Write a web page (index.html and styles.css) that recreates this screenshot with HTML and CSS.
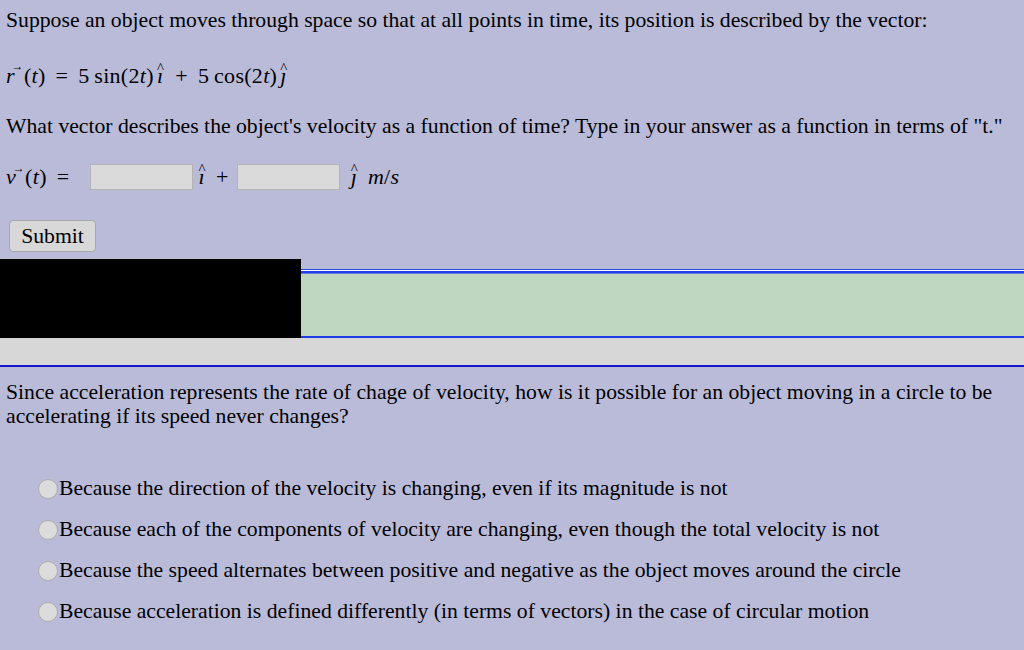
FILE: index.html
```html
<!DOCTYPE html>
<html lang="en">
<head>
    <meta charset="UTF-8">
    <title>Velocity question</title>
    <link rel="stylesheet" href="styles.css">
</head>
<body>
    <div class="section">
        <p class="line first">Suppose an object moves through space so that at all points in time, its position is described by the vector:</p>

        <p class="line math"><span class="vec"><i>r</i><span class="arrow">&rarr;</span></span>(<i>t</i>)<span class="op">=</span>5&thinsp;sin(2<i>t</i>)<span class="hat"><i>ı</i><span class="cap">^</span></span><span class="op">+</span>5&thinsp;cos(2<i>t</i>)<span class="hat"><i>ȷ</i><span class="cap">^</span></span></p>

        <p class="line">What vector describes the object's velocity as a function of time? Type in your answer as a function in terms of "t."</p>

        <form class="answer" onsubmit="return false">
            <div class="answer-row math"><span class="vec"><i>v</i><span class="arrow">&rarr;</span></span>(<i>t</i>)<span class="op">=</span><input type="text" class="answer-box" name="vx"><span class="hat"><i>ı</i><span class="cap">^</span></span><span class="op small">+</span><input type="text" class="answer-box" name="vy"><span class="hat last"><i>ȷ</i><span class="cap">^</span></span> <i>m</i>/<i>s</i></div>
            <button type="submit" class="submit-btn">Submit</button>
        </form>
    </div>

    <div class="result-row">
        <div class="redacted"></div>
        <div class="result">
            <div class="result-top"></div>
            <div class="result-fill"></div>
        </div>
    </div>
    <div class="result-gap"></div>

    <div class="section">
        <p class="question">Since acceleration represents the rate of chage of velocity, how is it possible for an object moving in a circle to be accelerating if its speed never changes?</p>

        <ul class="options">
            <li><label><input type="radio" name="q2">Because the direction of the velocity is changing, even if its magnitude is not</label></li>
            <li><label><input type="radio" name="q2">Because each of the components of velocity are changing, even though the total velocity is not</label></li>
            <li><label><input type="radio" name="q2">Because the speed alternates between positive and negative as the object moves around the circle</label></li>
            <li><label><input type="radio" name="q2">Because acceleration is defined differently (in terms of vectors) in the case of circular motion</label></li>
        </ul>
    </div>
</body>
</html>
```

FILE: styles.css
```css
:root {
    --page: #babbd9;
    --field: #dadada;
    --blue: #1f3ce8;
}

body {
    margin: 0;
    background: var(--page);
    font-family: 'Liberation Serif', 'Times New Roman', serif;
    font-size: 21.7px;
    color: #000;
}

.section {
    padding: 0 6px;
}

.line {
    margin: 0;
    height: 24px;
    line-height: 24px;
    white-space: nowrap;
}

.first {
    padding-top: 8px;
}

.line.math {
    margin-top: 32px;
}

.line + .line:not(.math) {
    margin-top: 26px;
}

.math {
    font-size: 22px;
    letter-spacing: 0.3px;
}

.math i {
    font-style: italic;
}

.op {
    padding: 0 10px;
}

.op.small {
    padding: 0 8px 0 9px;
}

.vec {
    position: relative;
    padding-right: 9px;
}

.arrow {
    position: absolute;
    right: 0;
    top: -9px;
    font-size: 12px;
    font-style: normal;
}

.hat {
    position: relative;
    display: inline-block;
    padding: 0 2px 0 3px;
}

.cap {
    position: absolute;
    left: 3px;
    top: -8px;
    font-size: 15px;
    font-style: normal;
}

.answer-row {
    margin-top: 26px;
    height: 26px;
    line-height: 26px;
    white-space: nowrap;
}

.answer-box {
    width: 103px;
    height: 26px;
    box-sizing: border-box;
    border: 1px solid #b4b4b4;
    background: var(--field);
    margin: 0 0 0 10px;
    vertical-align: top;
    font-size: 16px;
}

.answer-box + .hat {
    margin-left: 3px;
}

.answer-row .op.small + .answer-box {
    margin-left: 0;
}

.hat.last {
    margin-left: 8px;
    margin-right: 3px;
}

.submit-btn {
    display: block;
    margin: 30px 0 0 3px;
    width: 87px;
    height: 32px;
    font-family: inherit;
    font-size: 21.7px;
    background: #d8d8d8;
    border: 1px solid #a8a8a8;
    border-radius: 4px;
    padding: 0;
}

.result-row {
    display: flex;
    height: 79px;
    margin-top: 7px;
}

.redacted {
    width: 301px;
    background: #000;
}

.result {
    flex: 1;
    margin-top: 10px;
    display: flex;
    flex-direction: column;
    border-bottom: 2px solid var(--blue);
}

.result-top {
    height: 5px;
    background: linear-gradient(#2b46dc 0 1px, #fff 1px 2px, var(--blue) 2px 4px, #5f78e4 4px 5px);
}

.result-fill {
    flex: 1;
    background: #bfd7c0;
}

.result-gap {
    height: 27px;
    background: #d7d7d7;
    border-bottom: 2px solid #1414c8;
}

.question {
    margin: 13px 0 0;
    line-height: 24px;
}

.options {
    list-style: none;
    margin: 48px 0 0;
    padding: 0 0 0 32px;
}

.options li {
    height: 41px;
}

.options label {
    display: flex;
    align-items: center;
    height: 24px;
    white-space: nowrap;
}

.options input {
    appearance: none;
    -webkit-appearance: none;
    width: 20px;
    height: 20px;
    margin: 2px 1px 0 0;
    border-radius: 50%;
    border: 1px solid #acacac;
    background: #dcdcdc;
    flex: none;
}
```
